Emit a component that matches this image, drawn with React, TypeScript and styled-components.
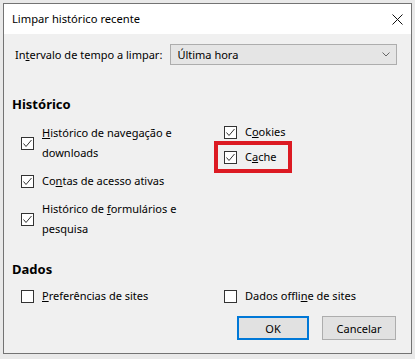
import React from 'react';
import styled, { createGlobalStyle } from 'styled-components';

const GlobalStyle = createGlobalStyle`
  html, body {
    margin: 0;
    padding: 0;
    background: #e9e9e9;
  }
  body {
    font-family: "Noto Sans", "Open Sans", sans-serif;
    font-size: 11px;
    color: #000;
  }
`;

const Window = styled.div`
  margin: 3px 0 0 3px;
  width: 407px;
  height: 349px;
  border: 1px solid #737373;
  background: #f0f0f0;
  display: flex;
  flex-direction: column;
`;

const TitleBar = styled.div`
  height: 30px;
  background: #fff;
  display: flex;
  align-items: center;
  justify-content: space-between;
  padding: 0 8px 0 8px;
`;

const Title = styled.span`
  font-size: 11.2px;
  line-height: 30px;
`;

const CloseButton = styled.button`
  border: 0;
  background: transparent;
  padding: 0;
  width: 12px;
  height: 12px;
  display: flex;
  align-items: center;
  justify-content: center;
`;

const Body = styled.div`
  flex: 1;
  padding: 10px 14px 0 8px;
  display: flex;
  flex-direction: column;
`;

const RangeRow = styled.div`
  display: flex;
  align-items: center;
  gap: 8px;
  padding-left: 3px;
  height: 21px;
`;

const Select = styled.div`
  flex: 1;
  height: 19px;
  border: 1px solid #adadad;
  background: #e5e5e5;
  display: flex;
  align-items: center;
  justify-content: space-between;
  padding: 0 6px 0 6px;
`;

const Heading = styled.div<{ $top: number }>`
  font-weight: 700;
  font-size: 13px;
  line-height: 18px;
  margin-top: ${p => p.$top}px;
`;

const OptionGrid = styled.div<{ $top: number }>`
  display: grid;
  grid-template-columns: 203px 1fr;
  padding-left: 9px;
  margin-top: ${p => p.$top}px;
`;

const Column = styled.div`
  display: flex;
  flex-direction: column;
  gap: 8px;
`;

const RightColumn = styled.div`
  display: flex;
  flex-direction: column;
  align-items: flex-start;
  margin-top: -1px;
`;

const Option = styled.label`
  display: flex;
  align-items: center;
  gap: 8px;
  line-height: 20px;
`;

const OptionText = styled.span<{ $width?: number }>`
  ${p => (p.$width ? `width: ${p.$width}px;` : '')}
`;

const Box = styled.span`
  width: 11px;
  height: 11px;
  border: 1px solid #333;
  background: #fff;
  flex: none;
  display: flex;
  align-items: center;
  justify-content: center;
`;

const Highlight = styled.div`
  border: 4px solid #dc1a22;
  padding: 2px 12px 2px 6px;
  margin-left: -10px;
  margin-top: -1px;
`;

const Buttons = styled.div`
  display: flex;
  justify-content: flex-end;
  gap: 13px;
  margin-top: 10px;
  padding-right: 1px;
`;

const Button = styled.button<{ $default?: boolean }>`
  font-family: inherit;
  font-size: 11px;
  color: #000;
  height: 24px;
  background: #e1e1e1;
  border: ${p => (p.$default ? '2px solid #0078d7' : '1px solid #adadad')};
  width: ${p => (p.$default ? 72 : 74)}px;
  padding: 0;
`;

const Check = () => (
  <svg width="11" height="11" viewBox="0 0 11 11">
    <polyline points="1.5,5.5 4,8.5 9.5,2" fill="none" stroke="#333" strokeWidth="1" />
  </svg>
);

function CheckOption({ checked, children, width }: { checked: boolean; children: React.ReactNode; width?: number }) {
  return (
    <Option>
      <Box>{checked && <Check />}</Box>
      <OptionText $width={width}>{children}</OptionText>
    </Option>
  );
}

export default function App() {
  return (
    <>
      <GlobalStyle />
      <Window>
        <TitleBar>
          <Title>Limpar histórico recente</Title>
          <CloseButton aria-label="Fechar">
            <svg width="11" height="11" viewBox="0 0 11 11">
              <path d="M0.5 0.5 L10.5 10.5 M10.5 0.5 L0.5 10.5" stroke="#111" strokeWidth="1" />
            </svg>
          </CloseButton>
        </TitleBar>
        <Body>
          <RangeRow>
            <span>In<u>t</u>ervalo de tempo a limpar:</span>
            <Select>
              <span>Última hora</span>
              <svg width="8" height="5" viewBox="0 0 8 5">
                <polyline points="0.5,0.5 4,4 7.5,0.5" fill="none" stroke="#666" strokeWidth="1" />
              </svg>
            </Select>
          </RangeRow>

          <Heading $top={30}>Histórico</Heading>
          <OptionGrid $top={10}>
            <Column>
              <CheckOption checked width={145}><u>H</u>istórico de navegação e downloads</CheckOption>
              <CheckOption checked>Co<u>n</u>tas de acesso ativas</CheckOption>
              <CheckOption checked width={145}>Histórico de <u>f</u>ormulários e pesquisa</CheckOption>
            </Column>
            <RightColumn>
              <CheckOption checked>C<u>o</u>okies</CheckOption>
              <Highlight>
                <CheckOption checked>C<u>a</u>che</CheckOption>
              </Highlight>
            </RightColumn>
          </OptionGrid>

          <Heading $top={21}>Dados</Heading>
          <OptionGrid $top={8}>
            <CheckOption checked={false}><u>P</u>referências de sites</CheckOption>
            <CheckOption checked={false}>Dados offli<u>n</u>e de sites</CheckOption>
          </OptionGrid>

          <Buttons>
            <Button $default>OK</Button>
            <Button>Cancelar</Button>
          </Buttons>
        </Body>
      </Window>
    </>
  );
}
